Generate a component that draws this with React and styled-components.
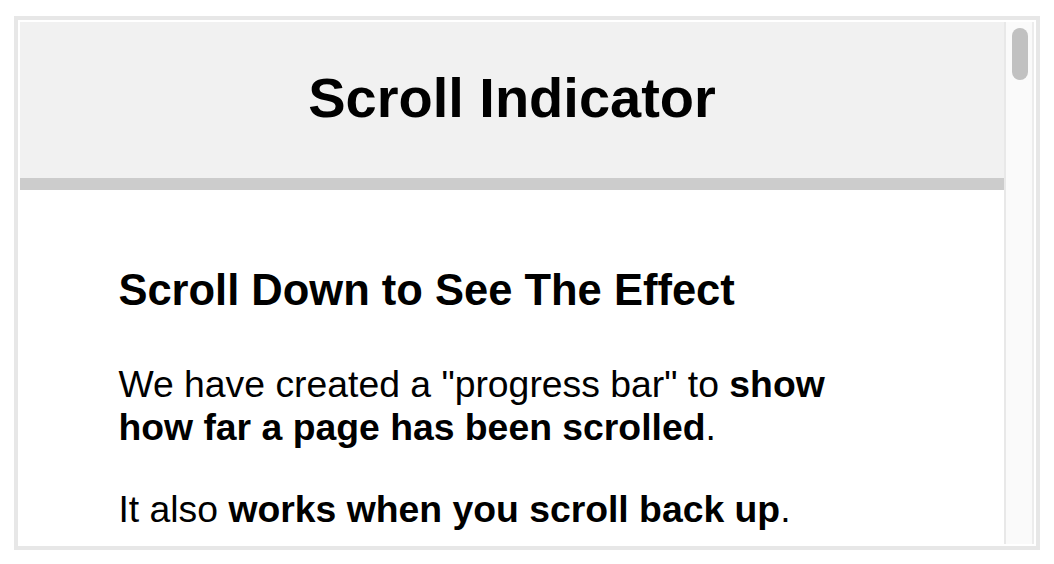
import React from "react";
import styled, { createGlobalStyle } from "styled-components";

const GlobalStyle = createGlobalStyle`
  html, body {
    margin: 0;
    padding: 0;
    background: #ffffff;
  }

  body {
    font-family: "Liberation Sans", Arial, Helvetica, sans-serif;
    color: #000000;
  }
`;

const App = () => {
  return (
    <>
      <GlobalStyle />
      <Frame>
        <Viewport>
          <Page>
            <Header>
              <Title>Scroll Indicator</Title>
              <ProgressTrack>
                <ProgressBar style={{ width: "0%" }} />
              </ProgressTrack>
            </Header>
            <Content>
              <Heading>Scroll Down to See The Effect</Heading>
              <Paragraph>
                We have created a "progress bar" to{" "}
                <b>show how far a page has been scrolled</b>.
              </Paragraph>
              <Paragraph>
                It also <b>works when you scroll back up</b>.
              </Paragraph>
            </Content>
          </Page>
          <ScrollTrack>
            <ScrollThumb />
          </ScrollTrack>
        </Viewport>
      </Frame>
    </>
  );
};

const Frame = styled.div`
  margin: 16px 0 0 14px;
  width: 1026px;
  box-sizing: border-box;
  border: 4px solid #e7e7e7;
  padding: 2px;
  background: #ffffff;
`;

const Viewport = styled.div`
  display: flex;
  height: 522px;
  overflow: hidden;
`;

const Page = styled.div`
  flex: 1;
  min-width: 0;
`;

const Header = styled.div`
  background-color: #f1f1f1;
`;

const Title = styled.h2`
  margin: 0;
  padding: 44px 0 49px;
  font-size: 56px;
  line-height: 63px;
  font-weight: bold;
  text-align: center;
`;

const ProgressTrack = styled.div`
  width: 100%;
  height: 12px;
  background: #cccccc;
`;

const ProgressBar = styled.div`
  height: 12px;
  background: #04aa6d;
`;

const Content = styled.div`
  width: 80%;
  margin: 0 auto;
  padding: 75px 0 0;
`;

const Heading = styled.h3`
  margin: 0 0 48px;
  font-size: 43.5px;
  line-height: 50px;
  font-weight: bold;
`;

const Paragraph = styled.p`
  margin: 0 0 39px;
  font-size: 37.33px;
  line-height: 43px;

  b {
    font-weight: bold;
  }
`;

const ScrollTrack = styled.div`
  width: 30px;
  flex-shrink: 0;
  box-sizing: border-box;
  background: #fafafa;
  border-left: 2px solid #e8e8e8;
  border-right: 2px solid #ececec;
  padding: 6px 0 0 6px;
`;

const ScrollThumb = styled.div`
  width: 16px;
  height: 52px;
  border-radius: 8px;
  background: #c1c1c1;
`;

export default App;
